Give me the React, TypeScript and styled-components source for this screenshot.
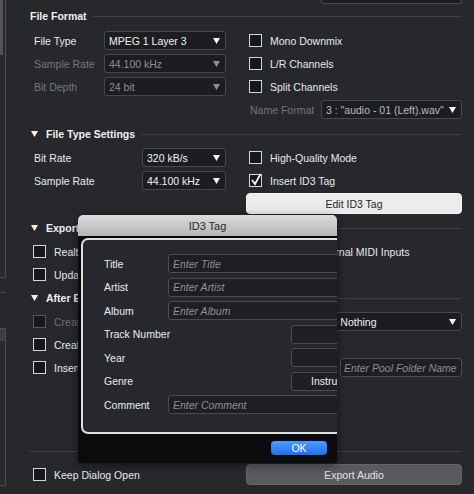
import React from "react";
import styled, { createGlobalStyle } from "styled-components";

const GlobalStyle = createGlobalStyle`
  html, body {
    margin: 0;
    padding: 0;
    background: #26282c;
  }
`;

const Window = styled.div`
  position: relative;
  width: 474px;
  height: 494px;
  display: flex;
  overflow: hidden;
  background: #26282c;
  font-family: "Liberation Sans", Arial, sans-serif;
  font-size: 10.5px;
  color: #e8e8e8;
`;

/* left strip with the clipped list panes */
const Sidebar = styled.div`
  width: 6px;
  display: flex;
  flex-direction: column;
`;

const Pane = styled.div<{ $h: number; $mt?: number }>`
  position: relative;
  height: ${(p) => p.$h}px;
  margin-top: ${(p) => p.$mt ?? 0}px;
  border-right: 1px solid #4a4c50;
  border-bottom: 1px solid #4a4c50;
  box-sizing: border-box;
`;

const ScrollThumb = styled.div`
  width: 3px;
  height: 55px;
  background: #505256;
`;

const PaneHeader = styled.div`
  height: 12px;
  background: #3d3f43;
  border-top: 1px solid #4a4c50;
`;

const Rule = styled.div<{ $mt: number }>`
  height: 1px;
  margin-top: ${(p) => p.$mt}px;
  background: #44464a;
`;

const Main = styled.div`
  flex: 1;
  display: flex;
  flex-direction: column;
  padding: 0 12px 0 24px;
`;

const TopStrip = styled.div`
  height: 6px;
  display: grid;
  grid-template-columns: 196px 216px;
  column-gap: 20px;
`;

const StubBox = styled.div`
  margin-left: 75px;
  height: 3px;
  border: 1px solid #4a4c50;
  border-top: none;
  border-radius: 0 0 3px 3px;
  background: #1b1d20;
`;

const SectionHeader = styled.div<{ $mt?: number }>`
  height: 20px;
  margin-top: ${(p) => p.$mt ?? 0}px;
  display: flex;
  align-items: center;
  gap: 6px;
  font-weight: bold;
  color: #f0f0f0;
`;

const HeaderLine = styled.div`
  flex: 1;
  height: 1px;
  background: #3e4044;
`;

const Twisty = styled.svg`
  width: 7px;
  height: 6px;
  margin-left: 1px;
  margin-right: 2px;
`;

const Columns = styled.div<{ $mt?: number }>`
  margin-top: ${(p) => p.$mt ?? 0}px;
  display: grid;
  grid-template-columns: 196px 216px;
  column-gap: 20px;
`;

const Column = styled.div`
  display: flex;
  flex-direction: column;
`;

const Row = styled.div`
  height: 23px;
  display: flex;
  align-items: center;
`;

const Label = styled.span<{ $w?: number; $dim?: boolean }>`
  width: ${(p) => (p.$w ? `${p.$w}px` : "auto")};
  padding-left: 4px;
  box-sizing: border-box;
  flex-shrink: 0;
  white-space: nowrap;
  color: ${(p) => (p.$dim ? "#75777b" : "#e8e8e8")};
`;

const SelectBox = styled.div<{ $w?: number; $dim?: boolean; $muted?: boolean }>`
  width: ${(p) => (p.$w ? `${p.$w}px` : "auto")};
  flex: ${(p) => (p.$w ? "none" : "1")};
  height: 19px;
  box-sizing: border-box;
  display: flex;
  align-items: center;
  justify-content: space-between;
  padding: 0 5px 0 4px;
  background: #1b1d20;
  border: 1px solid #46484c;
  border-radius: 3px;
  color: ${(p) => (p.$dim ? "#8d8f93" : p.$muted ? "#b9bbbe" : "#f2f2f2")};
  white-space: nowrap;
  overflow: hidden;
`;

const Arrow = styled.svg`
  width: 7px;
  height: 6px;
  flex-shrink: 0;
`;

const CheckRow = styled.label<{ $dim?: boolean }>`
  height: 23px;
  display: flex;
  align-items: center;
  gap: 8px;
  padding-left: 3px;
  white-space: nowrap;
  color: ${(p) => (p.$dim ? "#6c6e72" : "#e8e8e8")};
`;

const Box = styled.span<{ $dim?: boolean }>`
  position: relative;
  width: 13px;
  height: 13px;
  box-sizing: border-box;
  flex-shrink: 0;
  border: 1.5px solid ${(p) => (p.$dim ? "#55575b" : "#d6d6d6")};
  background: #17181b;
`;

const Tick = styled.svg`
  position: absolute;
  left: 0;
  top: -2px;
  width: 12px;
  height: 13px;
`;

const Button = styled.div<{ $light?: boolean }>`
  flex: 1;
  height: 19px;
  display: flex;
  align-items: center;
  justify-content: center;
  border-radius: 4px;
  background: ${(p) => (p.$light ? "#ececec" : "#585a5e")};
  border: 1px solid ${(p) => (p.$light ? "#f4f4f4" : "#64666a")};
  color: ${(p) => (p.$light ? "#1e1e1e" : "#e2e2e2")};
`;

const TextField = styled.div`
  flex: 1;
  height: 19px;
  box-sizing: border-box;
  display: flex;
  align-items: center;
  padding-left: 3px;
  background: #1d1f22;
  border: 1px solid #4a4c50;
  border-radius: 3px;
  color: #8c8e92;
  font-style: italic;
  white-space: nowrap;
  overflow: hidden;
`;

const Footer = styled.div`
  margin-top: auto;
  border-top: 1px solid #3e4044;
  padding: 11px 0 8px;
`;

/* ID3 tag sheet floating over the export window */
const Dialog = styled.div`
  position: absolute;
  left: 78px;
  top: 215px;
  width: 259px;
  height: 248px;
  overflow: hidden;
  display: flex;
  flex-direction: column;
  background: #0b0b0d;
  border-radius: 5px 5px 3px 3px;
  box-shadow: 0 2px 10px rgba(0, 0, 0, 0.5);
`;

const TitleBar = styled.div`
  height: 21px;
  flex-shrink: 0;
  display: flex;
  align-items: center;
  justify-content: center;
  background: linear-gradient(#dcdcdc, #b4b4b4);
  color: #2a2a2a;
  font-size: 11px;
  border-bottom: 1px solid #000;
`;

const TagPanel = styled.div`
  width: 380px;
  height: 196px;
  margin: 1px 0 0 3px;
  box-sizing: border-box;
  flex-shrink: 0;
  padding: 12px 0 0 21px;
  background: #26282c;
  border: 2px solid #dedede;
  border-radius: 7px;
`;

const TagRow = styled.div`
  height: 23.5px;
  display: flex;
  align-items: center;
`;

const TagLabel = styled.span`
  width: 64px;
  flex-shrink: 0;
  white-space: nowrap;
  color: #ececec;
`;

const ValueBox = styled.div<{ $offset?: number; $plain?: boolean }>`
  margin-left: ${(p) => p.$offset ?? 0}px;
  width: 240px;
  height: 19px;
  box-sizing: border-box;
  display: flex;
  align-items: center;
  padding-left: ${(p) => (p.$plain ? 19 : 4)}px;
  background: #1d1f22;
  border: 1px solid #4a4c50;
  border-radius: 3px;
  color: ${(p) => (p.$plain ? "#f0f0f0" : "#8e9094")};
  font-style: ${(p) => (p.$plain ? "normal" : "italic")};
  white-space: nowrap;
`;

const DialogFooter = styled.div`
  padding: 7px 0 0 193px;
`;

const OkButton = styled.div`
  width: 56px;
  height: 14px;
  display: flex;
  align-items: center;
  justify-content: center;
  border-radius: 4px;
  background: linear-gradient(#4f9bff, #1f6ff0);
  color: #fff;
  font-size: 10.5px;
`;

const DownArrow: React.FC<{ dim?: boolean }> = ({ dim }) => (
  <Arrow viewBox="0 0 7 6">
    <polygon points="0,0 7,0 3.5,6" fill={dim ? "#8d8f93" : "#f4f4f4"} />
  </Arrow>
);

const Check: React.FC<{ label: string; checked?: boolean; dim?: boolean }> = ({
  label,
  checked,
  dim
}) => (
  <CheckRow $dim={dim}>
    <Box $dim={dim}>
      {checked && (
        <Tick viewBox="0 0 12 13">
          <polyline
            points="2,7 5,11 10.5,1"
            fill="none"
            stroke="#f4f4f4"
            strokeWidth="1.8"
          />
        </Tick>
      )}
    </Box>
    {label}
  </CheckRow>
);

const Header: React.FC<{ title: string; twisty?: boolean; mt?: number }> = ({
  title,
  twisty,
  mt
}) => (
  <SectionHeader $mt={mt}>
    {twisty && (
      <Twisty viewBox="0 0 7 6">
        <polygon points="0,0 7,0 3.5,6" fill="#f0f0f0" />
      </Twisty>
    )}
    <span>{title}</span>
    <HeaderLine />
  </SectionHeader>
);

const tagFields = [
  { label: "Title", value: "Enter Title" },
  { label: "Artist", value: "Enter Artist" },
  { label: "Album", value: "Enter Album" },
  { label: "Track Number", value: "", offset: 123 },
  { label: "Year", value: "", offset: 123 },
  { label: "Genre", value: "Instrumental", offset: 123, plain: true },
  { label: "Comment", value: "Enter Comment" }
];

const App: React.FC = () => {
  return (
    <>
      <GlobalStyle />
      <Window>
        <Sidebar>
          <Pane $h={278}>
            <ScrollThumb />
          </Pane>
          <Rule $mt={14} />
          <Pane $h={158} $mt={35}>
            <PaneHeader />
          </Pane>
        </Sidebar>

        <Main>
          <TopStrip>
            <div />
            <StubBox />
          </TopStrip>

          <Header title="File Format" />
          <Columns $mt={3}>
            <Column>
              <Row>
                <Label $w={74}>File Type</Label>
                <SelectBox $w={122}>
                  MPEG 1 Layer 3
                  <DownArrow />
                </SelectBox>
              </Row>
              <Row>
                <Label $w={74} $dim>
                  Sample Rate
                </Label>
                <SelectBox $w={122} $dim>
                  44.100 kHz
                  <DownArrow dim />
                </SelectBox>
              </Row>
              <Row>
                <Label $w={74} $dim>
                  Bit Depth
                </Label>
                <SelectBox $w={122} $dim>
                  24 bit
                  <DownArrow dim />
                </SelectBox>
              </Row>
            </Column>
            <Column>
              <Check label="Mono Downmix" />
              <Check label="L/R Channels" />
              <Check label="Split Channels" />
              <Row>
                <Label $w={75} $dim>
                  Name Format
                </Label>
                <SelectBox $muted>
                  3 : "audio - 01 (Left).wav"
                  <DownArrow />
                </SelectBox>
              </Row>
            </Column>
          </Columns>

          <Header title="File Type Settings" twisty mt={3} />
          <Columns $mt={2}>
            <Column>
              <Row>
                <Label $w={112}>Bit Rate</Label>
                <SelectBox $w={84}>
                  320 kB/s
                  <DownArrow />
                </SelectBox>
              </Row>
              <Row>
                <Label $w={112}>Sample Rate</Label>
                <SelectBox $w={84}>
                  44.100 kHz
                  <DownArrow />
                </SelectBox>
              </Row>
            </Column>
            <Column>
              <Check label="High-Quality Mode" />
              <Check label="Insert ID3 Tag" checked />
              <Row>
                <Button $light>Edit ID3 Tag</Button>
              </Row>
            </Column>
          </Columns>

          <Header title="Export" twisty mt={3} />
          <Columns $mt={2}>
            <Column>
              <Check label="Realtime Export" />
              <Check label="Update Display" />
            </Column>
            <Column>
              <Check label="Mixdown External MIDI Inputs" />
            </Column>
          </Columns>

          <Header title="After Export" twisty mt={2} />
          <Columns $mt={2}>
            <Column>
              <Check label="Create Audio Track" dim />
              <Check label="Create Pool Folder" />
              <Check label="Insert to Project" />
            </Column>
            <Column>
              <Row>
                <Label $w={73}>Action</Label>
                <SelectBox>
                  Do Nothing
                  <DownArrow />
                </SelectBox>
              </Row>
              <Row />
              <Row>
                <Label $w={94}>Pool Folder</Label>
                <TextField>Enter Pool Folder Name</TextField>
              </Row>
            </Column>
          </Columns>

          <Footer>
            <Columns>
              <Column>
                <Check label="Keep Dialog Open" />
              </Column>
              <Column>
                <Row>
                  <Button>Export Audio</Button>
                </Row>
              </Column>
            </Columns>
          </Footer>
        </Main>

        <Dialog>
          <TitleBar>ID3 Tag</TitleBar>
          <TagPanel>
            {tagFields.map((f) => (
              <TagRow key={f.label}>
                <TagLabel>{f.label}</TagLabel>
                <ValueBox $offset={f.offset} $plain={f.plain}>
                  {f.value}
                </ValueBox>
              </TagRow>
            ))}
          </TagPanel>
          <DialogFooter>
            <OkButton>OK</OkButton>
          </DialogFooter>
        </Dialog>
      </Window>
    </>
  );
};

export default App;
